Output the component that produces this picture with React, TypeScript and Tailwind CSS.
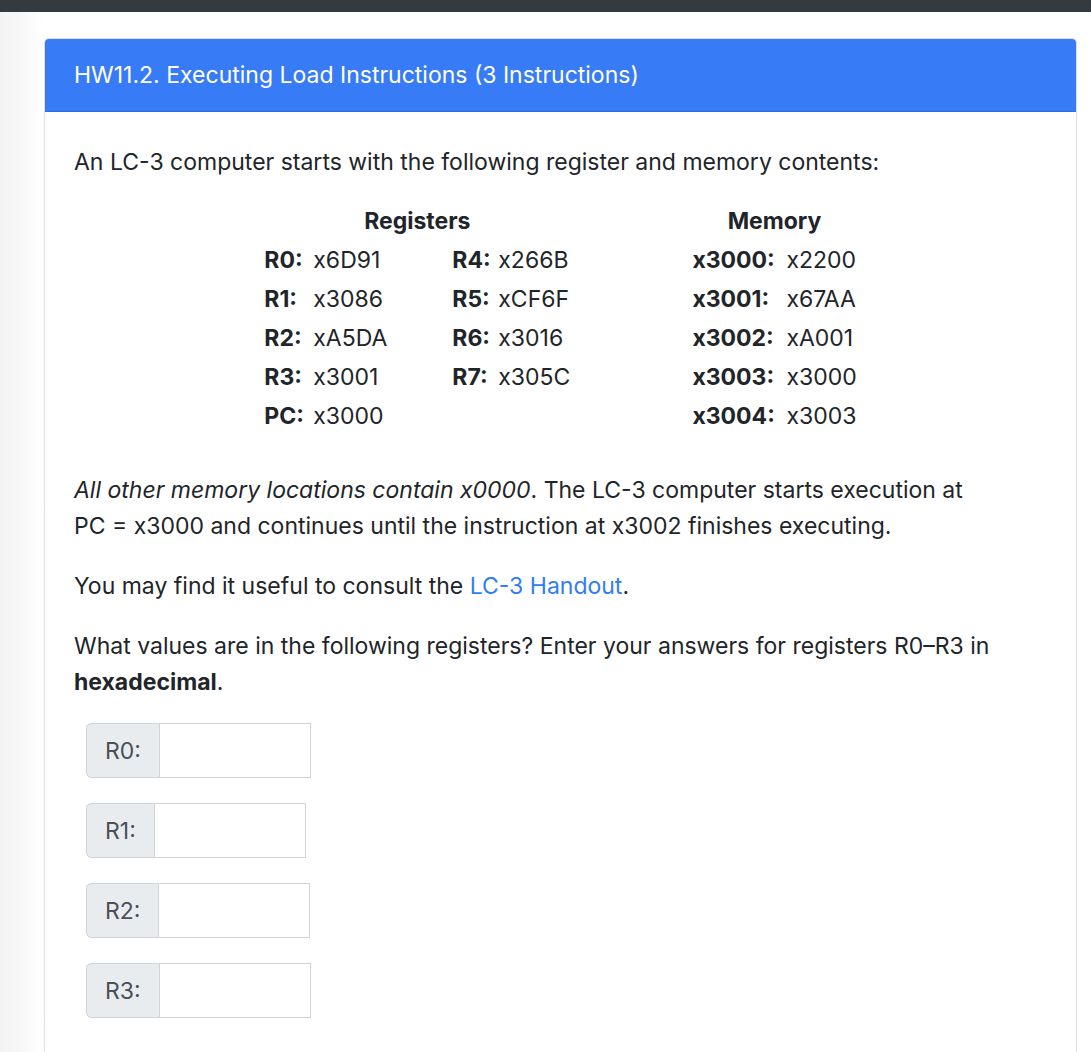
const registers = [
  ['R0:', 'x6D91', 'R4:', 'x266B'],
  ['R1:', 'x3086', 'R5:', 'xCF6F'],
  ['R2:', 'xA5DA', 'R6:', 'x3016'],
  ['R3:', 'x3001', 'R7:', 'x305C'],
  ['PC:', 'x3000', '', ''],
];

const memory = [
  ['x3000:', 'x2200'],
  ['x3001:', 'x67AA'],
  ['x3002:', 'xA001'],
  ['x3003:', 'x3000'],
  ['x3004:', 'x3003'],
];

const answers = ['R0:', 'R1:', 'R2:', 'R3:'];

const App = () => {
  return (
    <div
      className="min-h-screen bg-white text-[#212529] text-[23px] leading-[36px]"
      style={{ fontFamily: 'Inter, "Helvetica Neue", Arial, sans-serif' }}
    >
      <div className="h-3 bg-[#343a40]" />

      <div className="flex">
        <div className="w-[44px] shrink-0 bg-gradient-to-r from-[#f3f3f3] via-[#f8f8f8] to-white" />

        <div className="flex-1 pt-[26px] pr-[14px] bg-white">
          <div className="border border-[#dedede] rounded-t-[5px] overflow-hidden min-h-[1020px]">
            {/* header */}
            <div className="bg-[#377bf6] border-b border-[#2e6fe0] h-[73px] flex items-center px-[29px]">
              <h2 className="text-white text-[23px] font-normal">
                HW11.2. Executing Load Instructions (3 Instructions)
              </h2>
            </div>

            <div className="px-[29px] pt-[32px]">
              <p className="mb-[22px]">
                An LC-3 computer starts with the following register and memory contents:
              </p>

              <div className="flex justify-center gap-[122px] mb-[36px] leading-[39px]">
                <div>
                  <div className="text-center font-bold">Registers</div>
                  <div className="grid grid-cols-[49px_139px_46px_auto]">
                    {registers.map((row, i) => (
                      <div key={i} className="contents">
                        <span className="font-bold">{row[0]}</span>
                        <span>{row[1]}</span>
                        <span className="font-bold">{row[2]}</span>
                        <span>{row[3]}</span>
                      </div>
                    ))}
                  </div>
                </div>

                <div>
                  <div className="text-center font-bold">Memory</div>
                  <div className="grid grid-cols-[94px_auto]">
                    {memory.map((row, i) => (
                      <div key={i} className="contents">
                        <span className="font-bold">{row[0]}</span>
                        <span>{row[1]}</span>
                      </div>
                    ))}
                  </div>
                </div>
              </div>

              <p className="mb-[24px]">
                <em>All other memory locations contain x0000</em>. The LC-3 computer starts execution at
                <br />
                PC = x3000 and continues until the instruction at x3002 finishes executing.
              </p>

              <p className="mb-[24px]">
                You may find it useful to consult the{' '}
                <a className="text-[#2f7df6]" href="#">
                  LC-3 Handout
                </a>
                .
              </p>

              <p className="mb-[23px]">
                What values are in the following registers? Enter your answers for registers R0–R3 in
                <br />
                <b>hexadecimal</b>.
              </p>

              <div className="flex flex-col gap-[25px] pl-[12px]">
                {answers.map((label) => (
                  <div key={label} className="flex h-[55px]">
                    <span className="flex items-center px-[18px] bg-[#e9ecef] border border-[#ced4da] rounded-l-[5px] text-[#495057]">
                      {label}
                    </span>
                    <input
                      type="text"
                      className="w-[151px] border border-l-0 border-[#ced4da] bg-white outline-none"
                    />
                  </div>
                ))}
              </div>
            </div>
          </div>
        </div>
      </div>
    </div>
  );
};

export default App;
